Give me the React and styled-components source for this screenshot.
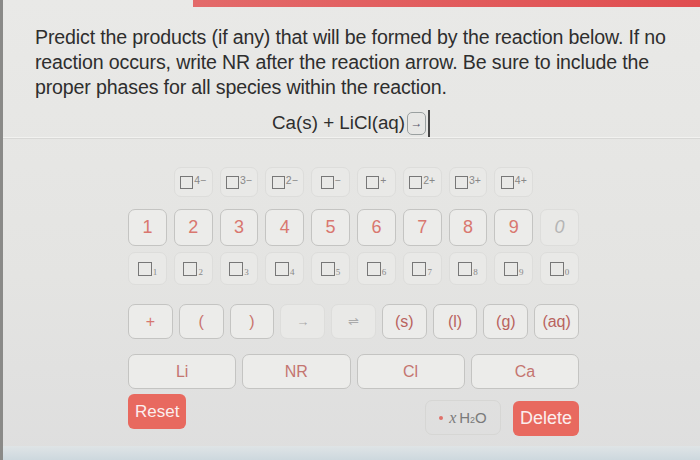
import React from "react";
import styled, { createGlobalStyle } from "styled-components";

const Global = createGlobalStyle`
  html, body {
    margin: 0;
    padding: 0;
  }
  body {
    width: 700px;
    height: 460px;
    overflow: hidden;
    background: #e3e3e1;
    font-family: "Liberation Sans", Arial, sans-serif;
  }
`;

const Page = styled.div`
  position: relative;
  width: 700px;
  height: 460px;
  display: flex;
  flex-direction: column;
  border-left: 3px solid #8a8a88;
  box-sizing: border-box;
  background: linear-gradient(180deg, #e9e9e7 0%, #e4e4e2 60%, #dedede 100%);
`;

const TopBar = styled.div`
  height: 7px;
  margin-left: 190px;
  background: linear-gradient(90deg, #e36a6a, #e04e50);
`;

const Prompt = styled.p`
  margin: 18px 0 0 32px;
  width: 645px;
  font-size: 19.6px;
  line-height: 25px;
  color: #2e2e2e;
  letter-spacing: -0.15px;
`;

const Equation = styled.div`
  display: flex;
  align-items: center;
  margin: 9px 0 0 269px;
  height: 28px;
  font-size: 18.8px;
  color: #2e2e2e;
`;

const ArrowBox = styled.span`
  display: inline-flex;
  align-items: center;
  justify-content: center;
  width: 17px;
  height: 21px;
  margin-left: 2px;
  border: 1.5px solid #9aa0a0;
  border-radius: 5px;
  font-size: 12px;
  color: #556;
`;

const Cursor = styled.span`
  width: 1.5px;
  height: 27px;
  margin-left: 2px;
  background: #444;
`;

const Divider = styled.div`
  height: 1px;
  margin-top: 0;
  background: #f2f2f0;
  border-bottom: 1px solid #d8d8d6;
`;

const Keypad = styled.div`
  display: flex;
  flex-direction: column;
  margin: 28px 0 0 125px;
  width: 451px;
`;

const Grid = styled.div`
  display: grid;
  grid-template-columns: repeat(${(p) => p.cols}, 1fr);
  column-gap: ${(p) => p.gap}px;
  margin-top: ${(p) => p.top}px;
`;

const Key = styled.div`
  display: flex;
  align-items: center;
  justify-content: center;
  height: ${(p) => p.h}px;
  grid-column: ${(p) => p.col || "auto"};
  box-sizing: border-box;
  border-radius: 7px;
  background: ${(p) => (p.dim ? "#e9e9e7" : "#ececea")};
  border: 1.5px solid ${(p) => (p.edge ? "#c4c4c2" : "#dddddb")};
  color: ${(p) => p.color || "#6a6a6a"};
  font-size: ${(p) => p.size || 17}px;
  font-style: ${(p) => (p.italic ? "italic" : "normal")};
`;

const Sq = styled.span`
  display: inline-block;
  width: ${(p) => p.s}px;
  height: ${(p) => p.s}px;
  border: 1.3px solid #777;
  box-sizing: border-box;
`;

const Sup = styled.span`
  font-size: 10.5px;
  color: #888;
  align-self: flex-start;
  margin-top: 6px;
  margin-left: 1px;
`;

const Sub = styled.span`
  font-size: 9px;
  color: #888;
  align-self: flex-end;
  margin-bottom: 7px;
  margin-left: 1px;
  font-family: "Liberation Serif", serif;
`;

const Bottom = styled.div`
  display: flex;
  align-items: flex-start;
  margin-top: 5px;
  gap: 12px;
`;

const RedButton = styled.div`
  display: flex;
  align-items: center;
  justify-content: center;
  height: 35px;
  padding: 0 ${(p) => p.pad}px;
  margin-top: ${(p) => p.top}px;
  border-radius: 6px;
  background: #e8695f;
  color: #fbeeee;
  font-size: ${(p) => p.size}px;
`;

const Spacer = styled.div`
  flex: 1;
`;

const Hydrate = styled.div`
  display: flex;
  align-items: center;
  justify-content: center;
  width: 76px;
  height: 35px;
  margin-top: 6px;
  box-sizing: border-box;
  border: 1.5px solid #d6d6d4;
  border-radius: 7px;
  font-size: 15px;
  color: #7a7a7a;
  gap: 3px;
`;

const Dot = styled.span`
  width: 4px;
  height: 4px;
  border-radius: 50%;
  background: #e0716a;
  margin-right: 3px;
`;

const Var = styled.span`
  font-family: "Liberation Serif", serif;
  font-style: italic;
  font-size: 16px;
`;

const Small = styled.span`
  font-size: 9px;
  align-self: flex-end;
  margin-bottom: 8px;
`;

const BottomStrip = styled.div`
  margin-top: auto;
  height: 14px;
  background: linear-gradient(180deg, #dfe4e6, #cdd8de);
`;

const charges = ["4−", "3−", "2−", "−", "+", "2+", "3+", "4+"];
const digits = ["1", "2", "3", "4", "5", "6", "7", "8", "9"];
const subs = ["1", "2", "3", "4", "5", "6", "7", "8", "9", "0"];
const symbols = [
  { t: "+", c: "#d6766f", e: true },
  { t: "(", c: "#c9746e", e: true },
  { t: ")", c: "#c9746e", e: true },
  { t: "→", c: "#aaa", e: false, s: 13 },
  { t: "⇌", c: "#aaa", e: false, s: 13 },
  { t: "(s)", c: "#b9635e", e: true },
  { t: "(l)", c: "#b9635e", e: true },
  { t: "(g)", c: "#b9635e", e: true },
  { t: "(aq)", c: "#b9635e", e: true },
];
const elements = ["Li", "NR", "Cl", "Ca"];

export default function App() {
  return (
    <Page>
      <Global />
      <TopBar />
      <Prompt>
        Predict the products (if any) that will be formed by the reaction below. If no
        reaction occurs, write NR after the reaction arrow. Be sure to include the
        proper phases for all species within the reaction.
      </Prompt>
      <Equation>
        Ca(s) + LiCl(aq)
        <ArrowBox>→</ArrowBox>
        <Cursor />
      </Equation>
      <Divider />
      <Keypad>
        <Grid cols={10} gap={7} top={0}>
          {charges.map((c, i) => (
            <Key key={c} h={30} col={i === 0 ? 2 : "auto"} dim>
              <Sq s={13} />
              <Sup>{c}</Sup>
            </Key>
          ))}
        </Grid>
        <Grid cols={10} gap={7} top={12}>
          {digits.map((d) => (
            <Key key={d} h={37} edge color="#d9776f" size={18}>
              {d}
            </Key>
          ))}
          <Key h={37} color="#b5b5b5" size={18} italic dim>
            0
          </Key>
        </Grid>
        <Grid cols={10} gap={7} top={6}>
          {subs.map((s) => (
            <Key key={s} h={33} dim>
              <Sq s={14} />
              <Sub>{s}</Sub>
            </Key>
          ))}
        </Grid>
        <Grid cols={9} gap={6} top={19}>
          {symbols.map((s) => (
            <Key key={s.t} h={35} edge={s.e} dim={!s.e} color={s.c} size={s.s || 16}>
              {s.t}
            </Key>
          ))}
        </Grid>
        <Grid cols={4} gap={6} top={15}>
          {elements.map((e) => (
            <Key key={e} h={35} edge color="#c47570" size={16}>
              {e}
            </Key>
          ))}
        </Grid>
        <Bottom>
          <RedButton pad={7} top={0} size={17}>Reset</RedButton>
          <Spacer />
          <Hydrate>
            <Dot />
            <Var>x</Var>
            <span>
              H<Small>2</Small>O
            </span>
          </Hydrate>
          <RedButton pad={7} top={7} size={18}>Delete</RedButton>
        </Bottom>
      </Keypad>
      <BottomStrip />
    </Page>
  );
}
